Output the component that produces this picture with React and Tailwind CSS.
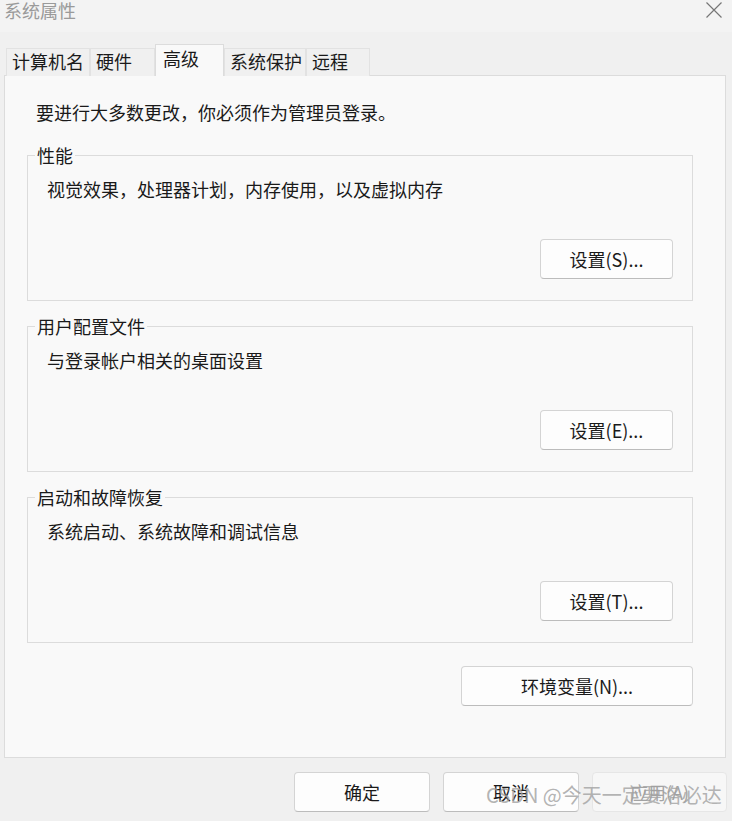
import React from "react";

const font = { fontFamily: '"Noto Sans CJK SC", "Noto Sans", sans-serif' };

function Btn({ children, className = "", disabled = false }) {
  return (
    <button
      className={
        "h-[40px] rounded-[4px] border text-[18px] leading-[24px] " +
        (disabled
          ? "border-[#e6e6e6] bg-[#f7f7f7] text-[#a3a3a3] "
          : "border-[#d4d4d4] border-b-[#bcbcbc] bg-[#fdfdfd] text-[#1a1a1a] ") +
        className
      }
    >
      {children}
    </button>
  );
}

function Group({ title, desc, button }) {
  return (
    <div className="h-[146px] border border-[#dcdcdc] flex flex-col">
      <div className="-mt-[12px] ml-[7px] h-[22px]">
        <span className="bg-[#f9f9f9] px-[2px] text-[18px] leading-[22px] text-[#1a1a1a]">{title}</span>
      </div>
      <div className="mt-[11px] pl-[19px] text-[18px] leading-[24px] text-[#1a1a1a]">{desc}</div>
      <div className="mt-[38px] flex justify-end pr-[19px]">
        <Btn className="w-[133px]">{button}</Btn>
      </div>
    </div>
  );
}

const tabs = [
  { label: "计算机名", w: "w-[84px]" },
  { label: "硬件", w: "w-[65px]" },
  { label: "高级", w: "w-[69px]", active: true },
  { label: "系统保护", w: "w-[82px]" },
  { label: "远程", w: "w-[64px]" },
];

export default function App() {
  return (
    <div className="relative w-[732px] h-[821px] bg-[#f0f0f0] overflow-hidden" style={font}>
      {/* title bar */}
      <div className="h-[32px] bg-[#f3f3f3] flex justify-between items-start">
        <div className="pl-[4px] -mt-[1px] text-[18px] leading-[22px] text-[#9a9a9a]">系统属性</div>
        <svg width="16" height="16" viewBox="0 0 16 16" className="mt-[2px] mr-[10px]">
          <path d="M0.5 0.5 L15.5 15.5 M15.5 0.5 L0.5 15.5" stroke="#767676" strokeWidth="1.2" fill="none" />
        </svg>
      </div>

      {/* tabs */}
      <div className="mt-[12px] ml-[6px] flex items-end h-[32px] relative z-10">
        {tabs.map((t) =>
          t.active ? (
            <div
              key={t.label}
              className={`${t.w} h-[32px] border border-[#dcdcdc] border-b-0 bg-[#f9f9f9] pl-[7px] pt-[1px] text-[18px] leading-[24px] text-[#1a1a1a]`}
            >
              {t.label}
            </div>
          ) : (
            <div
              key={t.label}
              className={`${t.w} h-[28px] border border-[#e2e2e2] border-b-0 bg-[#f0f0f0] pl-[5px] pt-0 text-[18px] leading-[24px] text-[#1a1a1a]`}
            >
              {t.label}
            </div>
          )
        )}
      </div>

      {/* panel */}
      <div className="ml-[4px] w-[722px] -mt-[1px] h-[683px] border border-[#dcdcdc] bg-[#f9f9f9] flex flex-col">
        <div className="pt-[24px] pl-[31px] text-[18px] leading-[24px] text-[#1a1a1a]">
          要进行大多数更改，你必须作为管理员登录。
        </div>
        <div className="mt-[31px] ml-[22px] mr-[32px] flex flex-col gap-[25px]">
          <Group title="性能" desc="视觉效果，处理器计划，内存使用，以及虚拟内存" button="设置(S)..." />
          <Group title="用户配置文件" desc="与登录帐户相关的桌面设置" button="设置(E)..." />
          <Group title="启动和故障恢复" desc="系统启动、系统故障和调试信息" button="设置(T)..." />
        </div>
        <div className="mt-[23px] mr-[32px] flex justify-end">
          <Btn className="w-[232px]">环境变量(N)...</Btn>
        </div>
      </div>

      {/* footer buttons */}
      <div className="mt-[14px] flex justify-end gap-[13px] pr-[5px]">
        <Btn className="w-[136px]">确定</Btn>
        <Btn className="w-[136px]">取消</Btn>
        <Btn className="w-[135px]" disabled>
          应用(A)
        </Btn>
      </div>

      {/* watermark */}
      <div className="absolute left-[486px] top-[781px] text-[20px] leading-[28px] text-[#a0a0a0]/80 whitespace-nowrap pointer-events-none">
        CSDN @今天一定要洛必达
      </div>
    </div>
  );
}
